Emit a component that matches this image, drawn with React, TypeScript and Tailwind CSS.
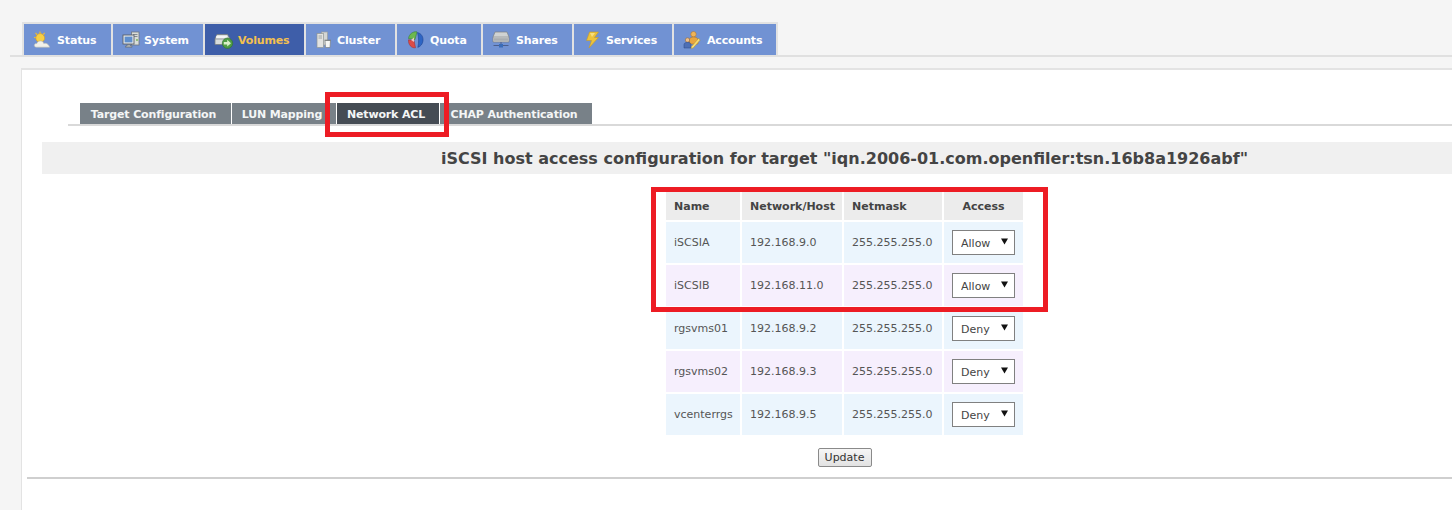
import React from "react";

const F = "font-['DejaVu_Sans','Verdana',sans-serif]";

const SunIcon = () => (
  <svg width="18" height="18" viewBox="0 0 18 18">
    <g stroke="#e8b93c" strokeWidth="1.2">
      <path d="M7 0.5V3M1 6.5H3.2M2.5 2L4.3 3.7M11.7 2L10 3.7" />
    </g>
    <circle cx="7.2" cy="7" r="4.4" fill="#f6cf45" stroke="#d89f2a" strokeWidth="0.7" />
    <path d="M3.5 16.2C1.6 16.2 1 14.9 1.4 13.8C1.8 12.6 3 12.4 3.8 12.6C4.3 10.8 6 9.6 8 10C9.6 10.3 10.6 11.4 10.8 12.5C12 11.9 14 12.4 15 13.4C16.2 14.5 16.6 16.2 16.6 16.2Z" fill="#f1f1ea" stroke="#b8b8ae" strokeWidth="0.6" />
  </svg>
);
const SystemIcon = () => (
  <svg width="18" height="18" viewBox="0 0 18 18">
    <rect x="9.5" y="1" width="7.5" height="13" fill="#d9ddd8" stroke="#6f7680" strokeWidth="0.8" />
    <path d="M11 3.5H15.5M11 5.5H15.5" stroke="#6f7680" strokeWidth="0.8" />
    <circle cx="15" cy="9" r="0.9" fill="#6fb04d" />
    <rect x="1" y="4" width="11" height="9" fill="#e6e9ea" stroke="#59616c" strokeWidth="0.9" />
    <rect x="2.6" y="5.6" width="7.8" height="5.8" fill="#5f8fce" />
    <path d="M5 13.5H8.5V15H10V16.3H3.5V15H5Z" fill="#a8adb0" stroke="#59616c" strokeWidth="0.5" />
  </svg>
);
const VolumesIcon = () => (
  <svg width="20" height="18" viewBox="0 0 20 18">
    <path d="M3 3.5H13.5L16 8V13.5H1V8Z" fill="#d8dcdc" stroke="#777d80" strokeWidth="0.8" />
    <path d="M1 8H16" stroke="#8b9092" strokeWidth="0.8" />
    <rect x="2.2" y="4.8" width="11" height="2.2" fill="#f4f5f4" />
    <circle cx="13.5" cy="12.2" r="5.2" fill="#4f9e45" stroke="#2f6e2c" strokeWidth="0.6" />
    <path d="M9.8 11H13.2V8.8L17 12.2L13.2 15.6V13.4H9.8Z" fill="#d9efc8" />
  </svg>
);
const ClusterIcon = () => (
  <svg width="18" height="18" viewBox="0 0 18 18">
    <rect x="6.5" y="1" width="6" height="13" fill="#d4d6d4" stroke="#9a9e9e" strokeWidth="0.7" />
    <rect x="2" y="2.5" width="6.5" height="14" fill="#e2e3e1" stroke="#8f9494" strokeWidth="0.7" />
    <path d="M3.5 5H7M3.5 7H7" stroke="#8f9494" strokeWidth="0.8" />
    <path d="M10 9.5H15.5L15 16.5H10.5Z" fill="#f5f6f4" stroke="#7b8080" strokeWidth="0.7" />
    <path d="M9.5 9.2H16" stroke="#7b8080" strokeWidth="1" />
  </svg>
);
const QuotaIcon = () => (
  <svg width="18" height="18" viewBox="0 0 18 18">
    <path d="M11 0.8C7 0.2 3 3 2.5 7.5L9 8.5Z" fill="#6cb84f" stroke="#2f7a2c" strokeWidth="0.5" />
    <path d="M2.5 8.8L8 9.6L9.5 16.8C5.5 17.4 2 13.5 2.5 8.8Z" fill="#dd4b47" stroke="#9e2a2a" strokeWidth="0.5" />
    <path d="M11.5 1.5C15.5 2.5 17.5 6 17 10C16.6 13 14.5 15.6 11.8 16.4C13 11.5 12.8 6.5 11.5 1.5Z" fill="#2e65c4" stroke="#1c3f88" strokeWidth="0.5" />
    <path d="M8 6.5L5 9L8 11Z" fill="#f0c7c3" />
  </svg>
);
const SharesIcon = () => (
  <svg width="18" height="18" viewBox="0 0 18 18">
    <path d="M3 1H15L17 6V11H1V6Z" fill="#cfd2d2" stroke="#7b7f82" strokeWidth="0.7" />
    <path d="M1 6H17" stroke="#8b8f92" strokeWidth="0.7" />
    <rect x="2" y="7.2" width="14" height="2.6" fill="#a9adb0" />
    <path d="M9 11V14M1.5 14.5H16.5" stroke="#4c5f8c" strokeWidth="1" />
    <rect x="7" y="13" width="4" height="3.5" fill="#3a6cb8" />
  </svg>
);
const ServicesIcon = () => (
  <svg width="18" height="18" viewBox="0 0 18 18">
    <path d="M6.5 1H15.5L11.5 6.5H15.5L6 17L8.5 9.5H3.5Z" fill="#edc33c" stroke="#c79a26" strokeWidth="0.6" />
    <path d="M7 2H12L9 6" fill="#f7df80" />
  </svg>
);
const AccountsIcon = () => (
  <svg width="18" height="18" viewBox="0 0 18 18">
    <circle cx="10.5" cy="3.2" r="2.7" fill="#eeb45a" stroke="#a86f24" strokeWidth="0.5" />
    <path d="M6.5 13V8.5C6.5 7 8.5 6 10.5 6C13 6 15 7 15 9V13Z" fill="#e8a63f" stroke="#a86f24" strokeWidth="0.5" />
    <circle cx="4.5" cy="9" r="2.2" fill="#eec08a" stroke="#8b5a2a" strokeWidth="0.5" />
    <path d="M1 17V13.5C1 12 2.8 11.4 4.5 11.4C6.4 11.4 8 12 8 13.5V17Z" fill="#4d6fb5" stroke="#2b4480" strokeWidth="0.5" />
    <path d="M8.5 15.5L15.5 7.5L17.2 9L10.2 17L8 17.4Z" fill="#f6dc72" stroke="#b3902d" strokeWidth="0.5" />
  </svg>
);

const tabs = [
  { label: "Status", w: "w-[87px] gap-[6px]", Icon: SunIcon },
  { label: "System", w: "w-[90px] gap-[4px]", Icon: SystemIcon },
  { label: "Volumes", w: "w-[99px] gap-[4px]", Icon: VolumesIcon, active: true },
  { label: "Cluster", w: "w-[89px] gap-[4px]", Icon: ClusterIcon },
  { label: "Quota", w: "w-[84px] gap-[6px]", Icon: QuotaIcon },
  { label: "Shares", w: "w-[89px] gap-[6px]", Icon: SharesIcon },
  { label: "Services", w: "w-[98px] gap-[5px]", Icon: ServicesIcon },
  { label: "Accounts", w: "w-[102px] gap-[6px]", Icon: AccountsIcon },
];

const subTabs = [
  { label: "Target Configuration", w: "w-[151px]" },
  { label: "LUN Mapping", w: "w-[104px]" },
  { label: "Network ACL", w: "w-[102px]", active: true },
  { label: "CHAP Authentication", w: "w-[152px]" },
];

const rows = [
  ["iSCSIA", "192.168.9.0", "Allow", "bg-[#ebf5fd]"],
  ["iSCSIB", "192.168.11.0", "Allow", "bg-[#f6effd]"],
  ["rgsvms01", "192.168.9.2", "Deny", "bg-[#ebf5fd]"],
  ["rgsvms02", "192.168.9.3", "Deny", "bg-[#f6effd]"],
  ["vcenterrgs", "192.168.9.5", "Deny", "bg-[#ebf5fd]"],
];

const AccessSelect = ({ value }: { value: string }) => (
  <div className="relative mx-auto w-[63px] h-[25px]">
    <select
      defaultValue={value}
      className="appearance-none w-full h-full bg-white border border-[#808080] pl-[8px] pt-[3px] text-[11px] text-[#444] outline-none rounded-none"
    >
      <option>Allow</option>
      <option>Deny</option>
    </select>
    <svg width="7" height="7" viewBox="0 0 7 7" className="absolute right-[7px] top-[8px]">
      <path d="M0 0.5H7L3.5 6.5Z" fill="#111" />
    </svg>
  </div>
);

export default function App() {
  return (
    <div className={`${F} relative h-[510px] w-full overflow-hidden bg-[#f5f5f5]`}>
      {/* main tabs */}
      <div className="pt-[22px]">
        <div className="border-b-2 border-[#e0e0e0] ml-[10px]">
          <div className="ml-[12px] flex w-[756px] gap-[2px] border-t-2 border-[#e2e2e2] pl-[2px] pr-[1px] bg-[#e2e2e2]">
            {tabs.map(({ label, w, Icon, active }) => (
              <div
                key={label}
                className={`${w} h-[31px] flex items-center pl-[9px] text-[11px] font-bold tracking-[-0.15px] whitespace-nowrap ${
                  active ? "bg-[#3e5ea9] text-[#f3c04f]" : "bg-[#7192d3] text-white"
                }`}
              >
                <span className="shrink-0 mt-[1px]"><Icon /></span>
                <span className="pt-[4px]">{label}</span>
              </div>
            ))}
          </div>
        </div>
      </div>

      {/* panel */}
      <div className="ml-[21px] mt-[11px] h-[442px] border-l border-t-2 border-[#e3e3e3] bg-white pt-[33px]">
        {/* sub tabs */}
        <div className="ml-[46px] border-b-2 border-[#d9d9d9] pl-[12px] flex gap-[1px]">
          {subTabs.map(({ label, w, active }) => (
            <div
              key={label}
              className={`${w} h-[21px] pt-[4px] pr-[4px] flex items-center justify-center text-[11px] font-bold tracking-[-0.15px] whitespace-nowrap text-[#f4f6f6] ${
                active ? "bg-[#454c54]" : "bg-[#788188]"
              }`}
            >
              {label}
            </div>
          ))}
        </div>

        {/* heading band */}
        <div className="ml-[20px] mt-[16px] w-[1605px]">
          <div className="h-[32px] pt-[2px] bg-[#f0f0f0] flex items-center justify-center text-[16px] font-bold text-[#444] whitespace-nowrap">
            iSCSI host access configuration for target "iqn.2006-01.com.openfiler:tsn.16b8a1926abf"
          </div>

          {/* table */}
          <table className="mx-auto mt-[16px] w-[361px] table-fixed border-separate border-spacing-[2px] text-[11px] text-[#555]">
            <colgroup>
              <col className="w-[74px]" />
              <col className="w-[100px]" />
              <col className="w-[98px]" />
              <col className="w-[79px]" />
            </colgroup>
            <thead>
              <tr className="h-[28px] bg-[#ececec] font-bold text-[#444]">
                <th className="pl-[8px] pt-[2px] text-left">Name</th>
                <th className="pl-[8px] pt-[2px] text-left">Network/Host</th>
                <th className="pl-[8px] pt-[2px] text-left">Netmask</th>
                <th className="pt-[2px] text-center">Access</th>
              </tr>
            </thead>
            <tbody>
              {rows.map(([name, host, access, bg]) => (
                <tr key={name} className={`h-[41px] ${bg}`}>
                  <td className="pl-[8px] pt-[2px]">{name}</td>
                  <td className="pl-[8px] pt-[2px]">{host}</td>
                  <td className="pl-[8px] pt-[2px]">255.255.255.0</td>
                  <td><AccessSelect value={access} /></td>
                </tr>
              ))}
            </tbody>
          </table>

          <div className="mt-[11px] flex justify-center">
            <button className="w-[54px] h-[19px] rounded-[2px] border border-[#8a8a8a] bg-gradient-to-b from-[#f6f6f6] to-[#e2e2e2] text-[11px] text-[#333] leading-none">
              Update
            </button>
          </div>
        </div>

        {/* rule */}
        <div className="ml-[5px] mt-[10px] h-[2px] bg-[#cfcfcf]" />
      </div>

      {/* red highlights drawn over the screenshot */}
      <div className="absolute left-[325px] top-[92px] h-[45px] w-[124px] border-[5px] border-[#ed1c24]" />
      <div className="absolute left-[651px] top-[187px] h-[125px] w-[397px] border-[5px] border-[#ed1c24]" />
    </div>
  );
}
